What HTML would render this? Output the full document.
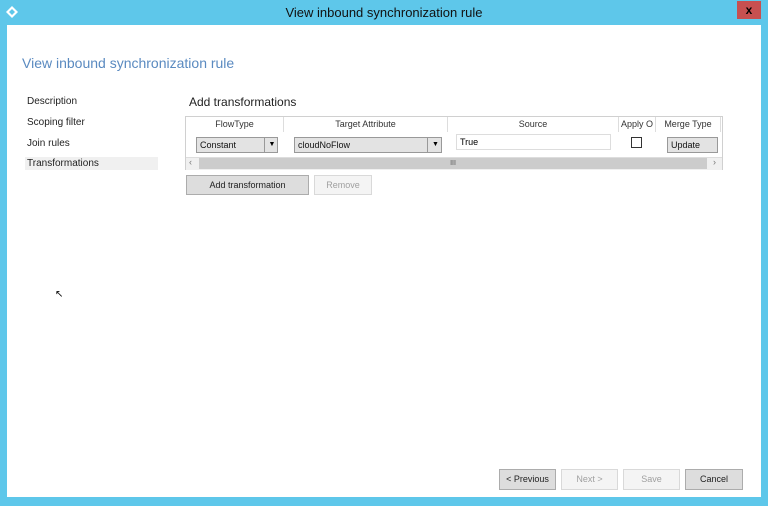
<!DOCTYPE html><html><head><style>
body{margin:0;width:768px;height:506px;background:#5ec7ea;position:relative;overflow:hidden;font-family:"Liberation Sans",sans-serif;}
.a{position:absolute;}
.w{left:7px;top:25px;width:754px;height:472px;background:#fff;}
.t{font-size:10px;color:#222;}
.btn{position:absolute;border:1px solid #acacac;background:#ddd;font-size:9px;text-align:center;box-sizing:border-box;line-height:18px;color:#222;}
.dis{background:#f4f4f4;border-color:#d9d9d9;color:#a0a0a0;}
.hd{position:absolute;top:117px;height:15px;line-height:15px;font-size:9px;color:#333;text-align:center;border-right:1px solid #ddd;}
.cb{position:absolute;border:1px solid #999;background:#e3e3e3;box-sizing:border-box;font-size:9px;line-height:14px;padding-left:3px;color:#111;}
</style></head><body>
<div class="a" style="left:6px;top:5px;width:12px;height:12px;"><svg width="12" height="12"><path d="M6 0L12 6L6 12L0 6Z" fill="#fff"/><path d="M6 3L9 6L6 9L3 6Z" fill="#5ec7ea"/></svg></div>
<div class="a" style="left:0;top:5px;width:768px;text-align:center;font-size:13px;color:#111;">View inbound synchronization rule</div>
<div class="a" style="left:737px;top:1px;width:24px;height:18px;background:#c75050;color:#000;font-size:12px;font-weight:bold;text-align:center;line-height:18px;">x</div>
<div class="a w"></div>
<div class="a" style="left:22px;top:55px;font-size:14px;color:#5a8ac0;">View inbound synchronization rule</div>
<div class="a t" style="left:27px;top:96px;">Description</div>
<div class="a t" style="left:27px;top:117px;">Scoping filter</div>
<div class="a t" style="left:27px;top:138px;">Join rules</div>
<div class="a" style="left:25px;top:157px;width:133px;height:13px;background:#f0f0f0;"></div>
<div class="a t" style="left:27px;top:158px;">Transformations</div>
<div class="a" style="left:189px;top:95px;font-size:12px;color:#222;">Add transformations</div>
<div class="a" style="left:185px;top:116px;width:538px;height:54px;border:1px solid #d0d0d0;box-sizing:border-box;"></div>
<div class="hd" style="left:186px;width:97px;">FlowType</div>
<div class="hd" style="left:284px;width:163px;">Target Attribute</div>
<div class="hd" style="left:448px;width:170px;">Source</div>
<div class="hd" style="left:619px;width:36px;overflow:hidden;white-space:nowrap;">Apply O</div>
<div class="hd" style="left:656px;width:64px;">Merge Type</div>
<div class="cb" style="left:196px;top:137px;width:82px;height:16px;">Constant</div>
<div class="a" style="left:264px;top:137px;width:14px;height:16px;border-left:1px solid #999;font-size:7px;text-align:center;line-height:16px;">▼</div>
<div class="cb" style="left:294px;top:137px;width:148px;height:16px;">cloudNoFlow</div>
<div class="a" style="left:427px;top:137px;width:15px;height:16px;border-left:1px solid #999;font-size:7px;text-align:center;line-height:16px;">▼</div>
<div class="a" style="left:456px;top:134px;width:155px;height:16px;border:1px solid #ddd;box-sizing:border-box;font-size:9px;padding-left:3px;line-height:14px;">True</div>
<div class="a" style="left:631px;top:137px;width:11px;height:11px;border:1px solid #333;box-sizing:border-box;"></div>
<div class="cb" style="left:667px;top:137px;width:51px;height:16px;">Update</div>
<div class="a" style="left:186px;top:157px;width:536px;height:12px;background:#f0f0f0;border-top:1px solid #ddd;"></div>
<div class="a" style="left:199px;top:158px;width:508px;height:11px;background:#ccc;text-align:center;font-size:7px;line-height:11px;color:#555;">III</div>
<div class="a" style="left:189px;top:157px;font-size:9px;color:#777;">‹</div>
<div class="a" style="left:713px;top:157px;font-size:9px;color:#777;">›</div>
<div class="btn" style="left:186px;top:175px;width:123px;height:20px;">Add transformation</div>
<div class="btn dis" style="left:314px;top:175px;width:58px;height:20px;">Remove</div>
<div class="a" style="left:55px;top:289px;font-size:10px;">↖</div>
<div class="btn" style="left:499px;top:469px;width:57px;height:21px;line-height:19px;">&lt; Previous</div>
<div class="btn dis" style="left:561px;top:469px;width:57px;height:21px;line-height:19px;">Next &gt;</div>
<div class="btn dis" style="left:623px;top:469px;width:57px;height:21px;line-height:19px;">Save</div>
<div class="btn" style="left:685px;top:469px;width:58px;height:21px;line-height:19px;">Cancel</div>
</body></html>
